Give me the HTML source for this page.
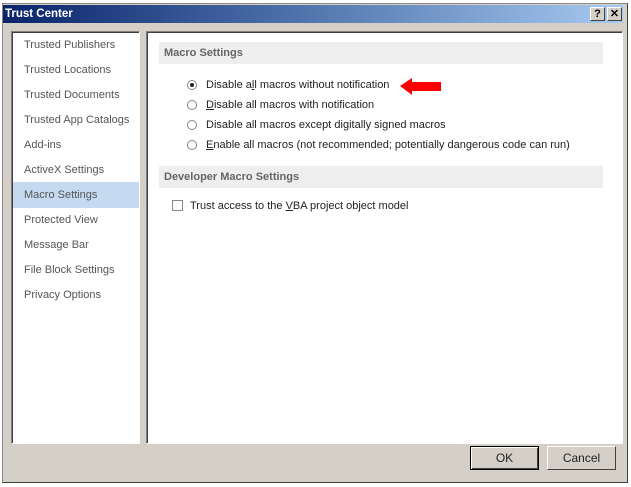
<!DOCTYPE html>
<html><head><style>
*{margin:0;padding:0;box-sizing:border-box}
body{width:631px;height:487px;background:#fff;font-family:"Liberation Sans",sans-serif;font-size:11px;color:#222;position:relative;overflow:hidden}
.win{position:absolute;left:2px;top:3px;width:626px;height:480px;background:#d4d0c8;border:1px solid #888;border-right-color:#404040;border-bottom-color:#404040}
.title{position:absolute;left:3px;top:5px;width:620px;height:18px;background:linear-gradient(to right,#0a246a,#4b6ea8 45%,#a6caf0);color:#fff;font-weight:bold;font-size:11.5px;line-height:18px;padding-left:2px}
.tb{position:absolute;top:7px;width:15px;height:14px;background:#d4d0c8;border:1px solid;border-color:#fff #404040 #404040 #fff;color:#000;font-weight:bold;font-size:11px;line-height:12px;text-align:center}
.panel{position:absolute;background:#fff;border:1px solid;border-color:#808080 #fff #fff #808080;box-shadow:inset 1px 1px 0 #404040}
.li{position:absolute;left:1px;width:126px;height:25px;line-height:25px;padding-left:11px;color:#555}
.hdr{position:absolute;left:12px;width:444px;height:22px;background:#eeeeee;color:#666;font-weight:bold;line-height:22px;padding-left:5px}
.opt{position:absolute;left:59px;line-height:16px;color:#222}
.r{position:absolute;left:-19px;top:3px;width:10px;height:10px;border-radius:50%;border:1px solid #888;background:#fff}
.r.on::after{content:"";position:absolute;left:2px;top:2px;width:4px;height:4px;border-radius:50%;background:#222}
.btn{position:absolute;top:446px;width:69px;height:24px;border:1px solid;border-color:#fff #404040 #404040 #fff;background:#d4d0c8;text-align:center;line-height:22px;color:#222;font-size:12px}
</style></head><body>
<div class="win"></div>
<div class="title">Trust Center</div>
<div class="tb" style="left:590px">?</div>
<div class="tb" style="left:607px">✕</div>
<div class="panel" style="left:11px;top:31px;width:129px;height:413px">
<div class="li" style="top:1px">Trusted Publishers</div>
<div class="li" style="top:26px">Trusted Locations</div>
<div class="li" style="top:51px">Trusted Documents</div>
<div class="li" style="top:76px">Trusted App Catalogs</div>
<div class="li" style="top:101px">Add-ins</div>
<div class="li" style="top:126px">ActiveX Settings</div>
<div class="li" style="top:150px;height:26px;line-height:26px;background:#c5d9f1">Macro Settings</div>
<div class="li" style="top:176px">Protected View</div>
<div class="li" style="top:201px">Message Bar</div>
<div class="li" style="top:226px">File Block Settings</div>
<div class="li" style="top:251px">Privacy Options</div>
</div>
<div class="panel" style="left:146px;top:31px;width:477px;height:413px">
<div class="hdr" style="top:10px">Macro Settings</div>
<div class="opt" style="top:45px"><span class="r on"></span>Disable a<u>l</u>l macros without notification</div>
<div class="opt" style="top:65px"><span class="r"></span><u>D</u>isable all macros with notification</div>
<div class="opt" style="top:85px"><span class="r"></span>Disable all macros except di<u>g</u>itally signed macros</div>
<div class="opt" style="top:105px"><span class="r"></span><u>E</u>nable all macros (not recommended; potentially dangerous code can run)</div>
<div class="hdr" style="top:134px">Developer Macro Settings</div>
<div class="opt" style="top:166px;left:43px"><span class="r" style="border-radius:0;left:-18px;top:2px;width:11px;height:11px"></span>Trust access to the <u>V</u>BA project object model</div>
<svg style="position:absolute;left:252px;top:45px" width="44" height="20"><polygon points="1,9 13,1 13,5 42,5 42,14 13,14 13,18" fill="#f00"/></svg>
</div>
<div class="btn" style="left:470px;border:1px solid #000;box-shadow:inset 1px 1px 0 #fff,inset -1px -1px 0 #404040">OK</div>
<div class="btn" style="left:547px">Cancel</div>
</body></html>
